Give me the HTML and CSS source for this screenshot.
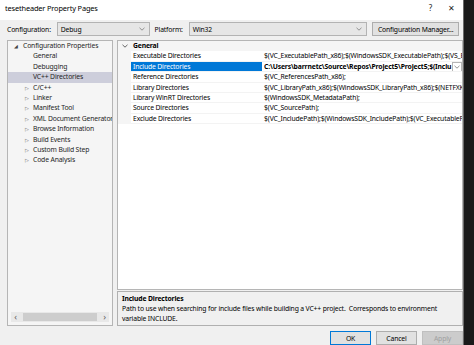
FILE: index.html
```html
<!DOCTYPE html>
<html lang="en">
<head>
    <meta charset="UTF-8">
    <title>tesetheader Property Pages</title>
    <link rel="stylesheet" href="styles.css">
</head>
<body>
    <div class="dialog">
        <div class="titlebar">
            <span class="title">tesetheader Property Pages</span>
            <span class="title-buttons"><span class="help">?</span><span class="close">&#x2715;</span></span>
        </div>

        <div class="toolbar">
            <label class="tb-label">Configuration:</label>
            <div class="combo combo-config">
                <span>Debug</span>
                <svg class="chev" width="6" height="4" viewBox="0 0 6 4"><path d="M0.5 0.8 L3 3.2 L5.5 0.8" fill="none" stroke="#7a7a7a" stroke-width="0.8"/></svg>
            </div>
            <label class="tb-label">Platform:</label>
            <div class="combo combo-platform">
                <span>Win32</span>
                <svg class="chev" width="6" height="4" viewBox="0 0 6 4"><path d="M0.5 0.8 L3 3.2 L5.5 0.8" fill="none" stroke="#7a7a7a" stroke-width="0.8"/></svg>
            </div>
            <button class="btn btn-manager">Configuration Manager...</button>
        </div>

        <div class="main">
            <div class="tree-panel">
                <ul class="tree">
                    <li class="node root"><span class="exp">&#x25E2;</span>Configuration Properties</li>
                    <li class="node leaf">General</li>
                    <li class="node leaf">Debugging</li>
                    <li class="node leaf selected">VC++ Directories</li>
                    <li class="node child"><span class="arrow">&#x25B7;</span>C/C++</li>
                    <li class="node child"><span class="arrow">&#x25B7;</span>Linker</li>
                    <li class="node child"><span class="arrow">&#x25B7;</span>Manifest Tool</li>
                    <li class="node child"><span class="arrow">&#x25B7;</span>XML Document Generator</li>
                    <li class="node child"><span class="arrow">&#x25B7;</span>Browse Information</li>
                    <li class="node child"><span class="arrow">&#x25B7;</span>Build Events</li>
                    <li class="node child"><span class="arrow">&#x25B7;</span>Custom Build Step</li>
                    <li class="node child"><span class="arrow">&#x25B7;</span>Code Analysis</li>
                </ul>
                <div class="hscroll">
                    <span class="sarrow">&lsaquo;</span>
                    <div class="thumb"></div>
                    <span class="sarrow">&rsaquo;</span>
                </div>
            </div>

            <div class="right-col">
                <div class="grid">
                    <div class="grid-row group">
                        <span class="gutter">
                            <svg width="6" height="4" viewBox="0 0 6 4"><path d="M0.5 0.8 L3 3.2 L5.5 0.8" fill="none" stroke="#555" stroke-width="0.9"/></svg>
                        </span>
                        <span class="group-name">General</span>
                    </div>
                    <div class="grid-row">
                        <span class="gutter"></span>
                        <span class="name">Executable Directories</span>
                        <span class="value">$(VC_ExecutablePath_x86);$(WindowsSDK_ExecutablePath);$(VS_E</span>
                    </div>
                    <div class="grid-row active">
                        <span class="gutter"></span>
                        <span class="name">Include Directories</span>
                        <span class="value">
                            <span class="vtext">C:\Users\barrnetc\Source\Repos\Project5\Project5;$(Inclu</span>
                            <span class="dd"><svg width="6" height="4" viewBox="0 0 6 4"><path d="M0.5 0.8 L3 3.2 L5.5 0.8" fill="none" stroke="#777" stroke-width="0.8"/></svg></span>
                        </span>
                    </div>
                    <div class="grid-row">
                        <span class="gutter"></span>
                        <span class="name">Reference Directories</span>
                        <span class="value">$(VC_ReferencesPath_x86);</span>
                    </div>
                    <div class="grid-row">
                        <span class="gutter"></span>
                        <span class="name">Library Directories</span>
                        <span class="value">$(VC_LibraryPath_x86);$(WindowsSDK_LibraryPath_x86);$(NETFXK</span>
                    </div>
                    <div class="grid-row">
                        <span class="gutter"></span>
                        <span class="name">Library WinRT Directories</span>
                        <span class="value">$(WindowsSDK_MetadataPath);</span>
                    </div>
                    <div class="grid-row">
                        <span class="gutter"></span>
                        <span class="name">Source Directories</span>
                        <span class="value">$(VC_SourcePath);</span>
                    </div>
                    <div class="grid-row">
                        <span class="gutter"></span>
                        <span class="name">Exclude Directories</span>
                        <span class="value">$(VC_IncludePath);$(WindowsSDK_IncludePath);$(VC_ExecutableP</span>
                    </div>
                </div>
                <div class="description">
                    <div class="desc-title">Include Directories</div>
                    <div class="desc-text">Path to use when searching for include files while building a VC++ project.&nbsp; Corresponds to environment<br>variable INCLUDE.</div>
                </div>
            </div>
        </div>

        <div class="footer">
            <button class="btn btn-ok">OK</button>
            <button class="btn">Cancel</button>
            <button class="btn btn-disabled">Apply</button>
        </div>
    </div>
    <div class="backdrop"></div>
</body>
</html>
```

FILE: styles.css
```css
body {
    margin: 0;
    width: 474px;
    height: 345px;
    overflow: hidden;
    background-color: #1e1e1e;
    font-family: "Noto Sans", "Open Sans", sans-serif;
    font-size: 6.8px;
    letter-spacing: -0.15px;
    color: #000;
    display: flex;
}

.dialog {
    width: 463px;
    flex: none;
    height: 345px;
    background-color: #f0f0f0;
    display: flex;
    flex-direction: column;
    border-right: 1px solid #6b6b6b;
    overflow: hidden;
}

.backdrop {
    flex: 1;
    background-color: #1a1a1a;
}

.titlebar {
    height: 20px;
    background: #fff;
    display: flex;
    justify-content: space-between;
    align-items: center;
    padding: 0 0 0 5px;
}

.title {
    font-size: 7.4px;
    margin-top: -5px;
}

.title-buttons {
    display: flex;
    gap: 16px;
    margin-right: 8px;
    margin-top: -6px;
    font-size: 8px;
    color: #222;
}

.toolbar {
    display: flex;
    align-items: center;
    height: 14px;
    margin-top: 2px;
    padding: 0 4px 0 7px;
}

.tb-label {
    margin-right: 6px;
}

.combo {
    height: 12px;
    border: 1px solid #b3b3b3;
    background: #e6e6e6;
    display: flex;
    align-items: center;
    justify-content: space-between;
    padding: 0 4px 0 3px;
    margin-right: 5px;
}

.combo-config {
    width: 85px;
}

.combo-platform {
    width: 172px;
}

.btn {
    font-family: "Noto Sans", "Open Sans", sans-serif;
    font-size: 6.8px;
    letter-spacing: -0.15px;
    height: 14px;
    padding: 0;
    background: #e1e1e1;
    border: 1px solid #adadad;
    color: #000;
}

.btn-manager {
    width: 88px;
    margin-left: auto;
}

.main {
    display: flex;
    gap: 4px;
    margin-top: 4px;
    padding: 0 0 0 7px;
    height: 286px;
}

.tree-panel {
    width: 104px;
    flex: none;
    border: 1px solid #b5b5b5;
    background: #f5f5f5;
    display: flex;
    flex-direction: column;
    overflow: hidden;
}

.tree {
    list-style: none;
    margin: 0;
    padding: 0;
    flex: 1;
}

.node {
    height: 10.4px;
    line-height: 10.4px;
    white-space: nowrap;
    color: #1e1e1e;
}

.root {
    padding-left: 6px;
}

.exp {
    display: inline-block;
    width: 9px;
    font-size: 5px;
    color: #444;
}

.leaf {
    padding-left: 25px;
}

.selected {
    background: #cdcedb;
}

.child {
    padding-left: 17px;
}

.arrow {
    display: inline-block;
    width: 8px;
    font-size: 5px;
    color: #555;
}

.hscroll {
    height: 10px;
    margin: 0 3px 3px 3px;
    display: flex;
    align-items: center;
    background: #e8e8e8;
    color: #606060;
}

.sarrow {
    width: 9px;
    text-align: center;
    font-size: 9px;
    line-height: 10px;
}

.thumb {
    flex: 1;
    height: 8px;
    background: #cdcdcd;
    margin: 0 3px;
}

.right-col {
    flex: 1;
    min-width: 0;
    display: flex;
    flex-direction: column;
}

.grid {
    flex: 1;
    background: #fff;
    border: 1px solid #b5b5b5;
    overflow: hidden;
}

.grid-row {
    display: flex;
    height: 10.4px;
    line-height: 10.4px;
    white-space: nowrap;
}

.gutter {
    width: 13px;
    flex: none;
    background: #f5f5f5;
    display: flex;
    align-items: center;
    justify-content: center;
}

.group-name {
    font-weight: bold;
    padding-left: 2px;
    flex: 1;
    background: #f5f5f5;
}

.group {
    background: #f5f5f5;
}

.name {
    width: 131px;
    flex: none;
    padding-left: 2px;
    border-bottom: 1px solid #f3f3f3;
    box-sizing: border-box;
}

.value {
    flex: 1;
    min-width: 0;
    overflow: hidden;
    padding-left: 2px;
    border-bottom: 1px solid #f3f3f3;
    box-sizing: border-box;
    display: flex;
}

.active .name {
    background: #0078d7;
    color: #fff;
}

.active .value {
    font-weight: bold;
}

.vtext {
    flex: 1;
    min-width: 0;
    overflow: hidden;
}

.dd {
    width: 10px;
    height: 10px;
    flex: none;
    border: 1px solid #b5b5b5;
    box-sizing: border-box;
    display: flex;
    align-items: center;
    justify-content: center;
    background: #fff;
}

.description {
    height: 35px;
    margin-top: 1px;
    border: 1px solid #b0b0b0;
    background: #f0f0f0;
    padding: 2px 4px;
    box-sizing: border-box;
    line-height: 10px;
}

.desc-title {
    font-weight: bold;
}

.footer {
    display: flex;
    justify-content: flex-end;
    gap: 5px;
    padding: 5px 0 0 0;
}

.footer .btn {
    width: 41px;
}

.btn-ok {
    border-color: #0078d7;
}

.btn-disabled {
    background: #cccccc;
    border-color: #bfbfbf;
    color: #a0a0a0;
}
```
